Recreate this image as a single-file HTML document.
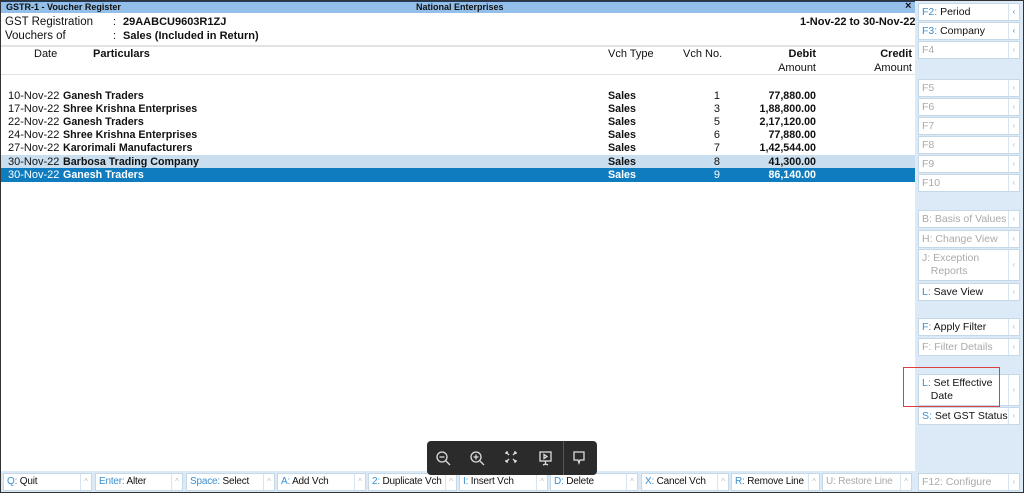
<!DOCTYPE html><html><head><style>
body{margin:0;width:1024px;height:493px;position:relative;overflow:hidden;background:#fff;font-family:"Liberation Sans",sans-serif;font-size:11px;color:#111}
.a{position:absolute;white-space:nowrap}
.b{font-weight:bold}
.r{text-align:right}
.btn{position:absolute;background:#fff;border:1px solid #c5d8e8;height:16px;line-height:16px;font-size:10.5px;padding-left:3px;box-sizing:border-box;overflow:hidden}
.btn i{font-style:normal;color:#3a8fd0}
.btn .ar{position:absolute;right:0;top:0;width:10px;height:100%;border-left:1px solid #d8e4ee;color:#bbb;font-size:8px;text-align:center;background:#fff}
.dis{color:#aaa}.dis i{color:#aaa}
.bb .btn{font-size:10px;letter-spacing:-0.2px}
.rows .b{font-size:10.7px}
</style></head><body>
<div class="a" style="left:0;top:0;width:1024px;height:493px;box-sizing:border-box;border:1px solid #333"></div>
<div class="a" style="left:1px;top:1px;width:914px;height:11px;background:#93bfe8;border-top:1px solid #1c3d66"></div>
<div class="a b" style="left:6px;top:2px;font-size:9px">GSTR-1 - Voucher Register</div>
<div class="a b" style="left:416px;top:2px;font-size:9px">National Enterprises</div>
<div class="a b" style="left:905px;top:0px;font-size:11px">×</div>
<div class="a" style="left:915px;top:1px;width:108px;height:491px;background:#dbeaf6"></div>
<div class="a" style="left:5px;top:16px;font-size:11.5px">GST Registration</div>
<div class="a" style="left:5px;top:30px;font-size:11.5px">Vouchers of</div>
<div class="a" style="left:113px;top:16px">:</div><div class="a" style="left:113px;top:30px">:</div>
<div class="a b" style="left:123px;top:16px">29AABCU9603R1ZJ</div>
<div class="a b" style="left:123px;top:30px">Sales (Included in Return)</div>
<div class="a b" style="left:800px;top:16px">1-Nov-22 to 30-Nov-22</div>
<div class="a" style="left:1px;top:45px;width:914px;height:2px;background:#e3e3e3"></div>
<div class="a" style="left:34px;top:48px">Date</div>
<div class="a b" style="left:93px;top:48px">Particulars</div>
<div class="a" style="left:608px;top:48px">Vch Type</div>
<div class="a" style="left:683px;top:48px">Vch No.</div>
<div class="a b r" style="left:716px;top:48px;width:100px">Debit</div>
<div class="a r" style="left:716px;top:62px;width:100px">Amount</div>
<div class="a b r" style="left:812px;top:48px;width:100px">Credit</div>
<div class="a r" style="left:812px;top:62px;width:100px">Amount</div>
<div class="a" style="left:1px;top:74px;width:914px;height:1px;background:#e3e3e3"></div>
<div class="a" style="left:1px;top:155px;width:914px;height:13px;background:#c9dff0"></div>
<div class="a" style="left:1px;top:168px;width:914px;height:14px;background:#107cc0"></div>
<div class="rows" style="position:absolute;left:0;top:90px;line-height:13.2px">
<div class="a" style="left:8px;top:0">10-Nov-22</div><div class="a b" style="left:63px;top:0">Ganesh Traders</div><div class="a b" style="left:608px;top:0">Sales</div><div class="a r" style="left:680px;top:0;width:40px">1</div><div class="a b r" style="left:716px;top:0;width:100px">77,880.00</div>
<div class="a" style="left:8px;top:13px">17-Nov-22</div><div class="a b" style="left:63px;top:13px">Shree Krishna Enterprises</div><div class="a b" style="left:608px;top:13px">Sales</div><div class="a r" style="left:680px;top:13px;width:40px">3</div><div class="a b r" style="left:716px;top:13px;width:100px">1,88,800.00</div>
<div class="a" style="left:8px;top:26px">22-Nov-22</div><div class="a b" style="left:63px;top:26px">Ganesh Traders</div><div class="a b" style="left:608px;top:26px">Sales</div><div class="a r" style="left:680px;top:26px;width:40px">5</div><div class="a b r" style="left:716px;top:26px;width:100px">2,17,120.00</div>
<div class="a" style="left:8px;top:39px">24-Nov-22</div><div class="a b" style="left:63px;top:39px">Shree Krishna Enterprises</div><div class="a b" style="left:608px;top:39px">Sales</div><div class="a r" style="left:680px;top:39px;width:40px">6</div><div class="a b r" style="left:716px;top:39px;width:100px">77,880.00</div>
<div class="a" style="left:8px;top:52px">27-Nov-22</div><div class="a b" style="left:63px;top:52px">Karorimali Manufacturers</div><div class="a b" style="left:608px;top:52px">Sales</div><div class="a r" style="left:680px;top:52px;width:40px">7</div><div class="a b r" style="left:716px;top:52px;width:100px">1,42,544.00</div>
<div class="a" style="left:8px;top:66px">30-Nov-22</div><div class="a b" style="left:63px;top:66px">Barbosa Trading Company</div><div class="a b" style="left:608px;top:66px">Sales</div><div class="a r" style="left:680px;top:66px;width:40px">8</div><div class="a b r" style="left:716px;top:66px;width:100px">41,300.00</div>
<div style="color:#fff"><div class="a" style="left:8px;top:79px">30-Nov-22</div><div class="a b" style="left:63px;top:79px">Ganesh Traders</div><div class="a b" style="left:608px;top:79px">Sales</div><div class="a r" style="left:680px;top:79px;width:40px">9</div><div class="a b r" style="left:716px;top:79px;width:100px">86,140.00</div></div>
</div>
<div class="btn" style="left:918px;top:3px;width:102px;height:18px"><i>F2:</i> Period<span class="ar" style="color:#3a8fd0">‹</span></div>
<div class="btn" style="left:918px;top:22px;width:102px;height:18px"><i>F3:</i> Company<span class="ar" style="color:#3a8fd0">‹</span></div>
<div class="btn dis" style="left:918px;top:41px;width:102px;height:18px">F4<span class="ar">‹</span></div>
<div class="btn dis" style="left:918px;top:79px;width:102px;height:18px">F5<span class="ar">‹</span></div>
<div class="btn dis" style="left:918px;top:98px;width:102px;height:18px">F6<span class="ar">‹</span></div>
<div class="btn dis" style="left:918px;top:117px;width:102px;height:18px">F7<span class="ar">‹</span></div>
<div class="btn dis" style="left:918px;top:136px;width:102px;height:18px">F8<span class="ar">‹</span></div>
<div class="btn dis" style="left:918px;top:155px;width:102px;height:18px">F9<span class="ar">‹</span></div>
<div class="btn dis" style="left:918px;top:174px;width:102px;height:18px">F10<span class="ar">‹</span></div>
<div class="btn dis" style="left:918px;top:210px;width:102px;height:18px"><i>B:</i> Basis of Values<span class="ar">‹</span></div>
<div class="btn dis" style="left:918px;top:230px;width:102px;height:18px"><i>H:</i> Change View<span class="ar">‹</span></div>
<div class="btn dis" style="left:918px;top:249px;width:102px;height:32px;line-height:13px;padding-top:2px"><i>J:</i> Exception<br>&nbsp;&nbsp;&nbsp;Reports<span class="ar" style="line-height:30px">‹</span></div>
<div class="btn" style="left:918px;top:283px;width:102px;height:18px"><i>L:</i> Save View<span class="ar">‹</span></div>
<div class="btn" style="left:918px;top:318px;width:102px;height:18px"><i>F:</i> Apply Filter<span class="ar">‹</span></div>
<div class="btn dis" style="left:918px;top:338px;width:102px;height:18px"><i>F:</i> Filter Details<span class="ar">‹</span></div>
<div class="btn" style="left:918px;top:374px;width:102px;height:32px;line-height:13px;padding-top:2px"><i>L:</i> Set Effective<br>&nbsp;&nbsp;&nbsp;Date<span class="ar" style="line-height:30px">‹</span></div>
<div class="a" style="left:903px;top:367px;width:95px;height:38px;border:1.5px solid #d9403f"></div>
<div class="btn" style="left:918px;top:407px;width:102px;height:18px"><i>S:</i> Set GST Status<span class="ar">‹</span></div>
<div class="btn dis" style="left:918px;top:473px;width:102px;height:18px">F12: Configure<span class="ar">‹</span></div>
<div class="a" style="left:1px;top:471px;width:914px;height:21px;background:#dbeaf6"></div>
<div class="bb">
<div class="btn" style="left:3px;top:473px;width:89px;height:18px"><i>Q:</i> Quit<span class="ar">^</span></div>
<div class="btn" style="left:95px;top:473px;width:88px;height:18px"><i>Enter:</i> Alter<span class="ar">^</span></div>
<div class="btn" style="left:186px;top:473px;width:89px;height:18px"><i>Space:</i> Select<span class="ar">^</span></div>
<div class="btn" style="left:277px;top:473px;width:89px;height:18px"><i>A:</i> Add Vch<span class="ar">^</span></div>
<div class="btn" style="left:368px;top:473px;width:89px;height:18px"><i>2:</i> Duplicate Vch<span class="ar">^</span></div>
<div class="btn" style="left:459px;top:473px;width:89px;height:18px"><i>I:</i> Insert Vch<span class="ar">^</span></div>
<div class="btn" style="left:550px;top:473px;width:88px;height:18px"><i>D:</i> Delete<span class="ar">^</span></div>
<div class="btn" style="left:641px;top:473px;width:88px;height:18px"><i>X:</i> Cancel Vch<span class="ar">^</span></div>
<div class="btn" style="left:731px;top:473px;width:89px;height:18px"><i>R:</i> Remove Line<span class="ar">^</span></div>
<div class="btn dis" style="left:822px;top:473px;width:90px;height:18px"><i>U:</i> Restore Line<span class="ar">^</span></div>
</div>
<div class="a" style="left:427px;top:441px;width:170px;height:34px;background:#2b2b2b;border-radius:4px"></div>
<div class="a" style="left:563px;top:441px;width:1px;height:34px;background:#555"></div>
<svg class="a" style="left:427px;top:441px" width="170" height="34" fill="none" stroke="#ddd" stroke-width="1.3">
<circle cx="15" cy="16" r="5"/><path d="M19 20l4 4M12.5 16h5"/>
<circle cx="49" cy="16" r="5"/><path d="M53 20l4 4M46.5 16h5M49 13.5v5"/>
<path d="M79 11l3 3M79 11v2M79 11h2M89 11l-3 3M89 11v2M89 11h-2M79 21l3-3M79 21v-2M79 21h2M89 21l-3-3M89 21v-2M89 21h-2"/>
<rect x="113" y="11" width="11" height="9"/><path d="M117 13.5l3 2-3 2zM118.5 20v3M116 24l2.5-1 2.5 1"/>
<path d="M147 11h10v8h-4l-1 3-1-3h-4z"/>
</svg>
</body></html>
